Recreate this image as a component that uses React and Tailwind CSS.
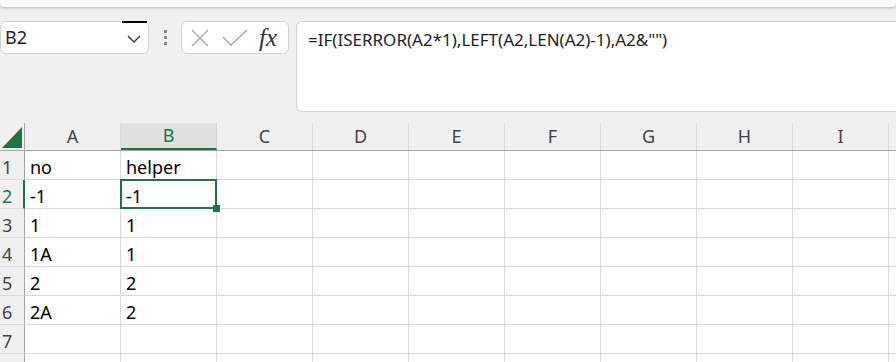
import React from 'react';

const COLS = ['A', 'B', 'C', 'D', 'E', 'F', 'G', 'H', 'I'];
const ROWS = [
  ['no', 'helper'],
  ['-1', '-1'],
  ['1', '1'],
  ['1A', '1'],
  ['2', '2'],
  ['2A', '2'],
  ['', ''],
  ['', ''],
];

const FONT = { fontFamily: '"Noto Sans", "Open Sans", sans-serif' };

function FormulaBar() {
  return (
    <div className="flex items-start mt-[14px] h-[91px]">
      {/* Name box */}
      <div className="relative w-[149px] h-[33px] bg-white border border-[#d4d4d4] rounded-md flex items-center justify-between pl-[4px] pr-[7px]">
        <div className="absolute -top-px left-[121px] w-[25px] h-[2px] bg-black" />
        <span className="text-[18px] text-[#222]">B2</span>
        <svg width="14" height="8" viewBox="0 0 14 8" className="mt-[2px]">
          <path d="M1 1 L7 7 L13 1" fill="none" stroke="#333" strokeWidth="1.4" />
        </svg>
      </div>
      {/* Grip */}
      <div className="w-[32px] h-[33px] flex flex-col items-center justify-center gap-[3px]">
        <div className="w-[3px] h-[3px] bg-[#8a8a8a]" />
        <div className="w-[3px] h-[3px] bg-[#8a8a8a]" />
        <div className="w-[3px] h-[3px] bg-[#8a8a8a]" />
      </div>
      {/* fx box */}
      <div className="w-[108px] h-[33px] bg-white border border-[#d4d4d4] rounded-md flex items-center pl-[8px]">
        <svg width="20" height="20" viewBox="0 0 20 20">
          <path d="M2 2 L18 18 M18 2 L2 18" stroke="#a8a8a8" strokeWidth="1.4" fill="none" />
        </svg>
        <svg width="26" height="20" viewBox="0 0 26 20" className="ml-[12px]">
          <path d="M1 9 L9 17 L25 2" stroke="#a8a8a8" strokeWidth="1.4" fill="none" />
        </svg>
        <span
          className="ml-[11px] text-[25px] italic text-[#333] leading-none"
          style={{ fontFamily: '"Liberation Serif", "DejaVu Serif", serif' }}
        >
          fx
        </span>
      </div>
      {/* Formula input */}
      <div className="ml-[7px] flex-1 h-[91px] bg-white border border-[#d4d4d4] border-r-0 rounded-l-md pl-[11px] pt-[5px]">
        <span className="text-[17px] text-[#222]">=IF(ISERROR(A2*1),LEFT(A2,LEN(A2)-1),A2&amp;"")</span>
      </div>
    </div>
  );
}

function Sheet() {
  return (
    <div className="mt-[11px]">
      {/* Column headers */}
      <div className="flex h-[28px] border-b border-[#a6a6a6]">
        <div className="w-[25px] shrink-0 flex items-end justify-center pb-[2px] border-r border-[#a6a6a6]">
          <svg width="20" height="21" viewBox="0 0 20 21">
            <path d="M0 21 L20 0 L20 21 Z" fill="#217346" />
          </svg>
        </div>
        {COLS.map(c => (
          <div
            key={c}
            className={
              c === 'B'
                ? 'w-[96px] shrink-0 flex items-center justify-center bg-[#e1e1e1] border-r border-[#d4d4d4] border-b-2 border-b-[#217346] text-[#217346] text-[18px]'
                : 'w-[96px] shrink-0 flex items-center justify-center border-r border-[#dcdcdc] text-[#444] text-[18px]'
            }
          >
            {c}
          </div>
        ))}
        <div className="flex-1" />
      </div>
      {/* Rows */}
      {ROWS.map((r, i) => (
        <div key={i} className="flex h-[29px] bg-white">
          <div
            className={
              i === 1
                ? 'w-[25px] shrink-0 bg-[#f0f0f0] border-r-2 border-[#217346] border-b border-b-[#dcdcdc] text-[#217346] text-[18px] leading-[24px] flex items-end pl-[2px]'
                : 'w-[25px] shrink-0 bg-[#f0f0f0] border-r border-[#a6a6a6] border-b border-b-[#dcdcdc] text-[#444] text-[18px] leading-[24px] flex items-end pl-[2px]'
            }
          >
            {i < 7 ? i + 1 : ''}
          </div>
          {COLS.map((c, j) => (
            <div
              key={c}
              className="relative w-[96px] shrink-0 border-r border-b border-[#dadada] flex items-end pl-[5px] text-[18px] leading-[24px] text-black"
            >
              {j < 2 ? r[j] : ''}
              {i === 1 && j === 1 && (
                <>
                  <div className="absolute -top-px -left-px w-[97px] h-[30px] border-2 border-[#217346] z-10" />
                  <div className="absolute -bottom-[4px] -right-[4px] w-[7px] h-[7px] bg-[#217346] z-10" />
                </>
              )}
            </div>
          ))}
          <div className="flex-1 border-b border-[#dadada]" />
        </div>
      ))}
    </div>
  );
}

export default function App() {
  return (
    <div className="w-[896px] h-[362px] bg-[#f0f0f0] overflow-hidden" style={FONT}>
      <div className="h-[7px] bg-[#fafafa] rounded-b-[4px] shadow-[0_1px_3px_rgba(0,0,0,0.25)]" />
      <FormulaBar />
      <Sheet />
    </div>
  );
}
